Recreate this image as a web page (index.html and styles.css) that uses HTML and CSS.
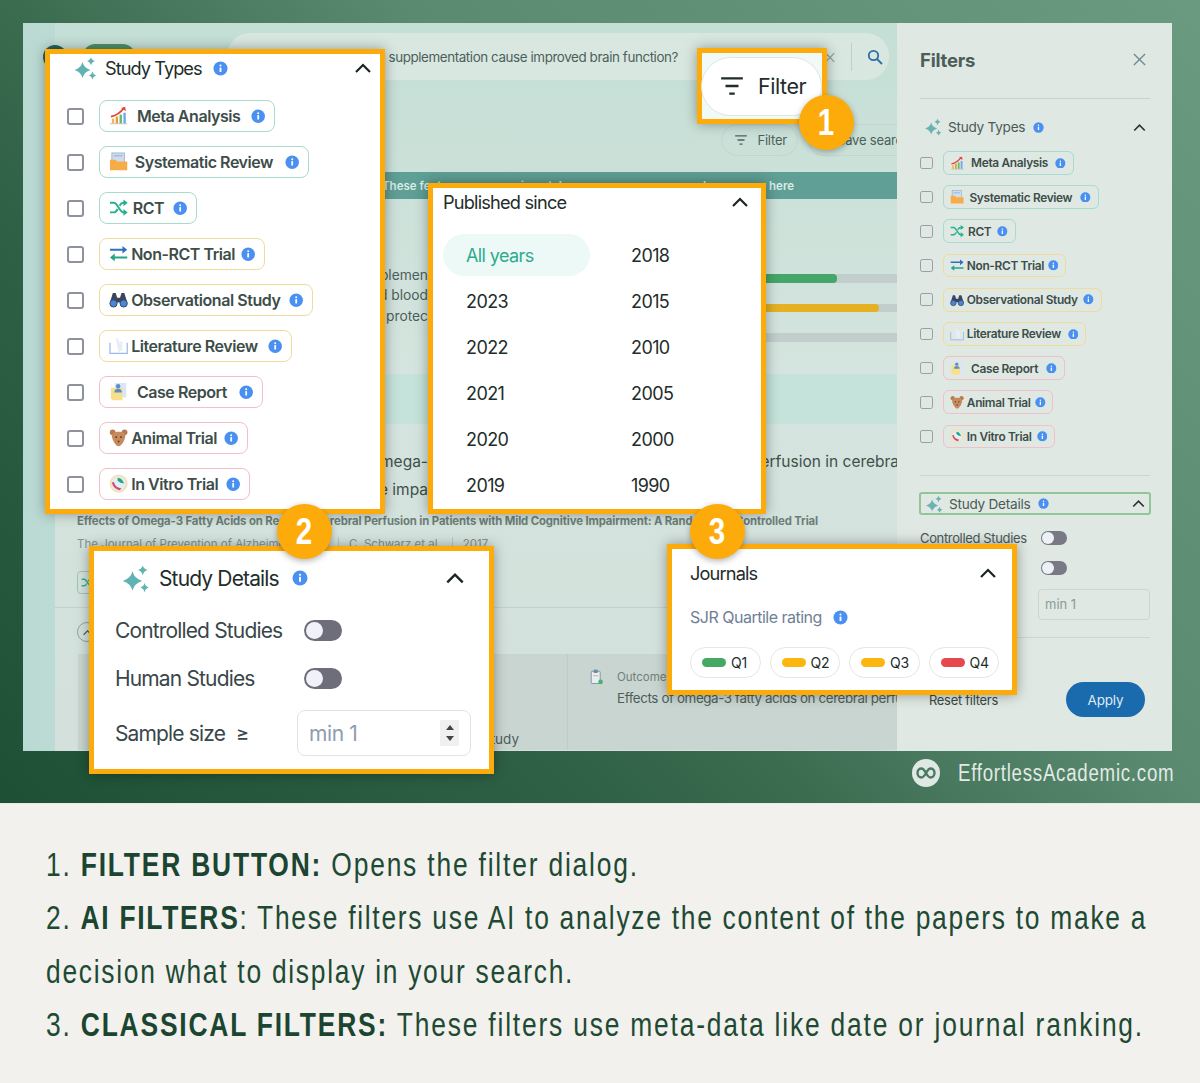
FILE: index.html
```html
<!DOCTYPE html>
<html lang="en">
<head>
<meta charset="utf-8">
<title>Filters</title>
<link rel="stylesheet" href="styles.css">
</head>
<body>
<svg class="sprite" aria-hidden="true">
  <symbol id="i-spark" viewBox="0 0 24 24"><path d="M9.500 6Q11 12 17.500 14 11 16 9.500 22 8 16 1.500 14 8 12 9.500 6Z"/><path d="M18 1Q18.600 4 22 5 18.600 6 18 9.500 17.400 6 14 5 17.400 4 18 1Z"/><path d="M19.500 15.500Q20 18.500 23 19.500 20 20.500 19.500 23.500 19 20.500 16 19.500 19 18.500 19.500 15.500Z"/></symbol>
  <symbol id="i-info" viewBox="0 0 16 16"><circle cx="8" cy="8" r="7.500" fill="#4a90f0"/><circle cx="8" cy="4.800" r="1.100" fill="#fff"/><rect x="7" y="6.800" width="2" height="5" rx=".6" fill="#fff"/></symbol>
  <symbol id="i-chev" viewBox="0 0 20 20"><path d="M3 14 10 7l7 7" fill="none" stroke="currentColor" stroke-width="2.200"/></symbol>
  <symbol id="i-filter" viewBox="0 0 24 24"><path d="M2 5h20M6 12h12M9.500 19h5" fill="none" stroke="currentColor" stroke-width="2.200"/></symbol>
  <symbol id="i-meta" viewBox="0 0 20 20"><rect x="1" y="18" width="18" height="1" fill="#b9c3cf"/><rect x="3" y="13" width="2.500" height="5" fill="#f2b84b"/><rect x="7" y="11" width="2.500" height="7" fill="#e89a3c"/><rect x="11" y="9" width="2.500" height="9" fill="#68b96f"/><rect x="15" y="7" width="2.500" height="11" fill="#6fa8e8"/><path d="M2 11C7 10 12 7 16 1.500" fill="none" stroke="#e2453c" stroke-width="1.800"/><path d="M12.500 2 17 1l.5 4.500Z" fill="#e2453c"/></symbol>
  <symbol id="i-folder" viewBox="0 0 20 20"><rect x="3" y="1" width="13" height="12" fill="#cfdcef" stroke="#8fa8cc" stroke-width=".8"/><rect x="5" y="3.500" width="9" height="1" fill="#8fa8cc"/><path d="M1 8h6l1.500 2H19v9H1Z" fill="#f7ac45"/></symbol>
  <symbol id="i-shuffle" viewBox="0 0 20 20"><path d="M1 5h4c4 0 6 10 10 10h2M1 15h4c1.800 0 3-1.500 4-3.500M11 8c1-1.700 2.300-3 4-3h2" fill="none" stroke="#27b08c" stroke-width="2"/><path d="m15 1.500 4.500 3.500-4.500 3.500ZM15 11.500l4.500 3.500-4.500 3.500Z" fill="#27b08c"/></symbol>
  <symbol id="i-swap" viewBox="0 0 20 20"><path d="M1 6h14" stroke="#2d6fc4" stroke-width="2"/><path d="m14 2 5 4-5 4Z" fill="#2d6fc4"/><path d="M19 14H5" stroke="#23a488" stroke-width="2"/><path d="m6 10-5 4 5 4Z" fill="#23a488"/></symbol>
  <symbol id="i-binoc" viewBox="0 0 20 20"><path d="M1 13 4 3h3l1.500 5h3L13 3h3l3 10-4 3-3-3H8l-3 3Z" fill="#3a4560"/><circle cx="4.700" cy="14" r="3.800" fill="#4a86d8" stroke="#3a4560"/><circle cx="15.300" cy="14" r="3.800" fill="#4a86d8" stroke="#3a4560"/></symbol>
  <symbol id="i-book" viewBox="0 0 20 20"><path d="M1 7v11h18V7" fill="none" stroke="#9db9ea" stroke-width="1.300"/><path d="M10 17C9 11 7 5 7.500 1c2 1.500 3 4 3.500 6 .8-1 2-1.500 3-1.500V15c-1.500 0-3 .8-4 2Z" fill="#e8eef8"/></symbol>
  <symbol id="i-case" viewBox="0 0 20 20"><rect x="6" y="1" width="12" height="15" fill="#dbe6f2"/><path d="M2 6h12v13H4l-2-2Z" fill="#f8df8b"/><circle cx="9.500" cy="4.500" r="2.300" fill="#5a8fcf"/><path d="M5.500 11c0-3 2-4 4-4s4 1 4 4Z" fill="#5a8fcf"/></symbol>
  <symbol id="i-mouse" viewBox="0 0 20 20"><circle cx="3.800" cy="4.500" r="3" fill="#b87a4e"/><circle cx="16.200" cy="4.500" r="3" fill="#b87a4e"/><path d="M3 8c0-3 3.500-4 7-4s7 1 7 4c0 4-4 11-7 11S3 12 3 8Z" fill="#c58a5d"/><circle cx="7.500" cy="9.500" r=".9" fill="#4e2e1c"/><circle cx="12.500" cy="9.500" r=".9" fill="#4e2e1c"/><circle cx="10" cy="14" r="1" fill="#6c3d22"/></symbol>
  <symbol id="i-vitro" viewBox="0 0 20 20"><circle cx="10" cy="10" r="9.500" fill="#f4e2bd"/><circle cx="10" cy="10" r="7.200" fill="#dff1ee"/><path d="M5 8c1 4 3 6 8 7l-2 2c-4-1-7-4-8-8Z" fill="#d8417a"/><path d="M9 4c3 0 6 3 6.500 6L12 9 9 7Z" fill="#2a9f8f"/></symbol>
  <symbol id="i-close" viewBox="0 0 14 14"><path d="m1 1 12 12M13 1 1 13" fill="none" stroke="currentColor" stroke-width="1.500"/></symbol>
  <symbol id="i-search" viewBox="0 0 16 16"><circle cx="6.500" cy="6.500" r="4.700" fill="none" stroke="currentColor" stroke-width="1.800"/><path d="m10 10 5 5" stroke="currentColor" stroke-width="1.800"/></symbol>
  <symbol id="i-clip" viewBox="0 0 16 20"><rect x="1.500" y="3" width="11" height="15" rx="1" fill="#e8eef2" stroke="#6d8aa8"/><rect x="4.500" y="1" width="5" height="4" fill="#6d8aa8"/><rect x="4" y="8" width="6" height="1" fill="#d9a24d"/><circle cx="13" cy="16" r="2.800" fill="#4caf6e"/></symbol>
  <symbol id="i-logo" viewBox="0 0 28 28"><circle cx="14" cy="14" r="14" fill="#dfe9e4"/><path d="M5.500 14c0-3 2-4.500 4-4.500 4 0 5 9 9 9 2 0 4-1.500 4-4.500s-2-4.500-4-4.500c-4 0-5 9-9 9-2 0-4-1.500-4-4.500Z" fill="none" stroke="#4b7a62" stroke-width="2.400"/></symbol>
</svg>

<main class="poster">
  <section class="hero">
    <div class="shot">
      <div class="app">
        <header class="app-top">
          <span class="app-logo"></span>
          <span class="app-tag"></span>
          <div class="searchbar">
            <span class="search-q">Does omega-3 fatty acid supplementation cause improved brain function?</span>
            <svg class="search-x"><use href="#i-close"/></svg>
            <span class="search-sep"></span>
            <svg class="search-go"><use href="#i-search"/></svg>
          </div>
        </header>
        <div class="toolbar">
          <span class="tool-btn"><svg class="tool-icon"><use href="#i-filter"/></svg>Filter</span>
          <span class="tool-btn tool-save">Save search</span>
        </div>
        <div class="banner"><span>These features are experimental.</span><span>Learn more here</span></div>
        <section class="evidence split">
          <div class="evidence-text">
            <p>Omega-3 supplemen</p>
            <p>improved blood</p>
            <p>and protec</p>
          </div>
          <div></div>
          <div class="bars">
            <div class="bar"><span class="fill fill-green bar-w1"></span></div>
            <div class="bar"><span class="fill fill-yellow bar-w2"></span></div>
            <div class="bar"></div>
          </div>
        </section>
        <div class="band"></div>
        <section class="result">
          <div class="split result-title">
            <div class="result-left"><p>Effects of omega-</p><p>acids on the impa</p></div>
            <div></div>
            <div class="result-right">perfusion in cerebral</div>
          </div>
          <p class="paper">Effects of Omega-3 Fatty Acids on Regional Cerebral Perfusion in Patients with Mild Cognitive Impairment: A Randomized Controlled Trial</p>
          <p class="paper-meta"><span class="meta-journal">The Journal of Prevention of Alzheimer's</span><span>C. Schwarz et al.</span><span>2017</span></p>
          <div class="tag-stub"><svg class="tag-icon"><use href="#i-shuffle"/></svg></div>
          <div class="card-rule"></div>
          <div class="round-stub"><svg class="round-icon"><use href="#i-chev"/></svg></div>
        </section>
        <section class="details">
          <div class="details-left">Cohort study</div>
          <div class="details-right">
            <div class="outcome-head"><svg class="clip"><use href="#i-clip"/></svg>Outcome</div>
            <p class="outcome">Effects of omega-3 fatty acids on cerebral perfusion</p>
          </div>
        </section>
      </div>

      <aside class="drawer">
        <header class="drawer-head"><h2>Filters</h2><svg class="drawer-close"><use href="#i-close"/></svg></header>
        <div class="sec-head">
          <svg class="spark"><use href="#i-spark"/></svg><span>Study Types</span>
          <svg class="info"><use href="#i-info"/></svg><svg class="chev"><use href="#i-chev"/></svg>
        </div>
        <ul class="types types-sm">
          <li><span class="box"></span><span class="chip c-green w-meta"><svg class="ic gap-l"><use href="#i-meta"/></svg>Meta Analysis<svg class="info"><use href="#i-info"/></svg></span></li>
          <li><span class="box"></span><span class="chip c-green w-sys"><svg class="ic gap-m"><use href="#i-folder"/></svg>Systematic Review<svg class="info"><use href="#i-info"/></svg></span></li>
          <li><span class="box"></span><span class="chip c-green w-rct"><svg class="ic gap-s"><use href="#i-shuffle"/></svg>RCT<svg class="info"><use href="#i-info"/></svg></span></li>
          <li><span class="box"></span><span class="chip c-yellow w-non"><svg class="ic"><use href="#i-swap"/></svg>Non-RCT Trial<svg class="info"><use href="#i-info"/></svg></span></li>
          <li><span class="box"></span><span class="chip c-yellow w-obs"><svg class="ic"><use href="#i-binoc"/></svg>Observational Study<svg class="info"><use href="#i-info"/></svg></span></li>
          <li><span class="box"></span><span class="chip c-yellow w-lit"><svg class="ic"><use href="#i-book"/></svg>Literature Review<svg class="info"><use href="#i-info"/></svg></span></li>
          <li><span class="box"></span><span class="chip c-pink w-case"><svg class="ic gap-l"><use href="#i-case"/></svg>Case Report<svg class="info"><use href="#i-info"/></svg></span></li>
          <li><span class="box"></span><span class="chip c-pink w-ani"><svg class="ic"><use href="#i-mouse"/></svg>Animal Trial<svg class="info"><use href="#i-info"/></svg></span></li>
          <li><span class="box"></span><span class="chip c-pink w-vit"><svg class="ic"><use href="#i-vitro"/></svg>In Vitro Trial<svg class="info"><use href="#i-info"/></svg></span></li>
        </ul>
        <div class="drawer-rule rule-a"></div>
        <div class="sec-head sec-boxed">
          <svg class="spark"><use href="#i-spark"/></svg><span>Study Details</span>
          <svg class="info"><use href="#i-info"/></svg><svg class="chev"><use href="#i-chev"/></svg>
        </div>
        <div class="drawer-row"><span>Controlled Studies</span><span class="toggle toggle-sm"></span></div>
        <div class="drawer-row"><span>Human Studies</span><span class="toggle toggle-sm"></span></div>
        <div class="drawer-min"><span class="drawer-input">min 1</span></div>
        <div class="drawer-rule rule-b"></div>
        <footer class="drawer-foot"><span class="reset">Reset filters</span><span class="apply">Apply</span></footer>
      </aside>
    </div>
    <div class="brand"><svg class="brand-logo"><use href="#i-logo"/></svg><span class="brand-name">EffortlessAcademic.com</span></div>

    <div class="callout call-types">
      <div class="call-head">
        <svg class="spark"><use href="#i-spark"/></svg><span>Study Types</span>
        <svg class="info"><use href="#i-info"/></svg><svg class="chev"><use href="#i-chev"/></svg>
      </div>
      <ul class="types types-lg">
        <li><span class="box"></span><span class="chip c-green w-meta"><svg class="ic gap-l"><use href="#i-meta"/></svg>Meta Analysis<svg class="info"><use href="#i-info"/></svg></span></li>
        <li><span class="box"></span><span class="chip c-green w-sys"><svg class="ic gap-m"><use href="#i-folder"/></svg>Systematic Review<svg class="info"><use href="#i-info"/></svg></span></li>
        <li><span class="box"></span><span class="chip c-green w-rct"><svg class="ic gap-s"><use href="#i-shuffle"/></svg>RCT<svg class="info"><use href="#i-info"/></svg></span></li>
        <li><span class="box"></span><span class="chip c-yellow w-non"><svg class="ic"><use href="#i-swap"/></svg>Non-RCT Trial<svg class="info"><use href="#i-info"/></svg></span></li>
        <li><span class="box"></span><span class="chip c-yellow w-obs"><svg class="ic"><use href="#i-binoc"/></svg>Observational Study<svg class="info"><use href="#i-info"/></svg></span></li>
        <li><span class="box"></span><span class="chip c-yellow w-lit"><svg class="ic"><use href="#i-book"/></svg>Literature Review<svg class="info"><use href="#i-info"/></svg></span></li>
        <li><span class="box"></span><span class="chip c-pink w-case"><svg class="ic gap-l"><use href="#i-case"/></svg>Case Report<svg class="info"><use href="#i-info"/></svg></span></li>
        <li><span class="box"></span><span class="chip c-pink w-ani"><svg class="ic"><use href="#i-mouse"/></svg>Animal Trial<svg class="info"><use href="#i-info"/></svg></span></li>
        <li><span class="box"></span><span class="chip c-pink w-vit"><svg class="ic"><use href="#i-vitro"/></svg>In Vitro Trial<svg class="info"><use href="#i-info"/></svg></span></li>
      </ul>
    </div>

    <div class="callout call-filter">
      <div class="filter-pill"><svg class="filter-icon"><use href="#i-filter"/></svg><span>Filter</span></div>
    </div>

    <div class="callout call-years">
      <div class="years-head"><span>Published since</span><svg class="chev"><use href="#i-chev"/></svg></div>
      <div class="years-grid">
        <span class="year year-on">All years</span><span class="year">2018</span>
        <span class="year">2023</span><span class="year">2015</span>
        <span class="year">2022</span><span class="year">2010</span>
        <span class="year">2021</span><span class="year">2005</span>
        <span class="year">2020</span><span class="year">2000</span>
        <span class="year">2019</span><span class="year">1990</span>
      </div>
    </div>

    <div class="callout call-details">
      <div class="details-head">
        <svg class="spark"><use href="#i-spark"/></svg><span>Study Details</span>
        <svg class="info"><use href="#i-info"/></svg><svg class="chev"><use href="#i-chev"/></svg>
      </div>
      <div class="opt-row"><span class="opt-label">Controlled Studies</span><span class="toggle"></span></div>
      <div class="opt-row"><span class="opt-label">Human Studies</span><span class="toggle"></span></div>
      <div class="opt-row opt-size">
        <span class="opt-label">Sample size</span><span class="opt-ge">≥</span>
        <span class="num-input"><span>min 1</span><span class="spin"><i class="spin-up"></i><i class="spin-down"></i></span></span>
      </div>
    </div>

    <div class="callout call-journals">
      <div class="journals-head"><span>Journals</span><svg class="chev"><use href="#i-chev"/></svg></div>
      <div class="sjr"><span>SJR Quartile rating</span><svg class="info"><use href="#i-info"/></svg></div>
      <div class="quarts">
        <span class="quart"><i class="q-bar q-green"></i>Q1</span>
        <span class="quart"><i class="q-bar q-amber"></i>Q2</span>
        <span class="quart"><i class="q-bar q-amber"></i>Q3</span>
        <span class="quart"><i class="q-bar q-red"></i>Q4</span>
      </div>
    </div>

    <span class="badge badge-1"><span class="badge-num">1</span></span>
    <span class="badge badge-2"><span class="badge-num">2</span></span>
    <span class="badge badge-3"><span class="badge-num">3</span></span>
  </section>

  <section class="caption">
    <div class="caption-text">
      <p>1. <b>FILTER BUTTON:</b> Opens the filter dialog.</p>
      <p class="cap-tight">2. <b>AI FILTERS</b>: These filters use AI to analyze the content of the papers to make a decision what to display in your search.</p>
      <p>3. <b>CLASSICAL FILTERS:</b> These filters use meta-data like date or journal ranking.</p>
    </div>
  </section>
</main>
</body>
</html>
```

FILE: styles.css
```css
* { box-sizing: border-box; }
html, body { margin: 0; padding: 0; }
body { width: 1200px; height: 1083px; overflow: hidden; background: #f2f1ee; font-family: Inter, "Noto Sans", sans-serif; color: #33423e; }
p, ul, h2 { margin: 0; padding: 0; }
ul { list-style: none; }
svg { display: block; flex: none; }
.sprite { position: absolute; width: 0; height: 0; }

.poster { display: flex; flex-direction: column; }
.hero { position: relative; height: 804px; padding: 23px 28px 0 23px; background: linear-gradient(45deg, #1d5034 0%, #2f6146 30%, #3b6b4f 40%, #5a8a70 60%, #6a9a80 100%); border-bottom: 1px solid #e4ece7; }
.shot { display: grid; grid-template-columns: 874px 275px; height: 728px; overflow: hidden; }

/* background app */
.app { display: flex; flex-direction: column; overflow: hidden; background: linear-gradient(90deg, #b9d9d3 0, #bcdbd4 32px, transparent 32px), linear-gradient(180deg, #c4dfd5 0%, #d5e4de 50%, #d3e0db 100%); color: #4d5f5a; }
.app-top { display: flex; align-items: flex-start; height: 46px; margin-top: 10px; padding-left: 20px; }
.app-logo { width: 24px; height: 24px; margin-top: 12px; border-radius: 50%; background: #24625f; }
.app-tag { width: 52px; height: 24px; margin: 11px 0 0 16px; border-radius: 12px; background: #4f8f6b; }
.searchbar { display: flex; align-items: center; justify-content: flex-end; width: 662px; height: 47px; margin: 0 8px 0 auto; border-radius: 23px; background: #d9e7e1; font-size: 13.4px; letter-spacing: -.41px; }
.search-q { margin-right: 173px; white-space: nowrap; }
.search-x { position: absolute; left: 825px; top: 52px; width: 10px; height: 11px; color: #8a9a96; }
.search-sep { width: 1px; height: 28px; margin-right: 15px; background: #c0cfca; }
.search-go { width: 16px; height: 16px; margin-right: 6px; color: #2f6ca8; }
.toolbar { display: flex; justify-content: flex-end; gap: 10px; height: 32px; margin: 45px -40px 0 0; }
.tool-btn { display: flex; align-items: center; gap: 9px; height: 32px; padding: 0 10px 0 12px; border: 1px solid #c4d4ce; border-radius: 16px; font-size: 13px; letter-spacing: -.2px; }
.tool-icon { width: 14px; height: 14px; }
.tool-save { width: 129px; padding-left: 28px; white-space: nowrap; }
.banner { display: flex; justify-content: space-between; align-items: center; height: 27px; margin: 16px 0 0 32px; padding: 0 103px 0 327px; background: #5f9f95; color: #d9ebe7; font-size: 11.5px; font-weight: 600; white-space: nowrap; }

.split { display: grid; grid-template-columns: 405px 338px 131px; }
.evidence { height: 175px; }
.evidence-text { padding-top: 65.500px; text-align: right; font-size: 13.800px; line-height: 20.5px; white-space: nowrap; }
.bars { display: flex; flex-direction: column; gap: 21px; padding-top: 75px; }
.bar { height: 8.500px; background: #c1cecb; }
.fill { display: block; height: 100%; border-radius: 0 4px 4px 0; }
.fill-green { background: #46a568; }
.fill-yellow { background: #e5b022; }
.bar-w1 { width: 54%; }
.bar-w2 { width: 86%; }
.band { height: 50px; margin-left: 32px; background: #c5e3da; }
.result { display: flex; flex-direction: column; height: 230px; margin-left: 32px; }
.result-title { margin: 24px 0 0 -32px; font-size: 15.5px; line-height: 28px; white-space: nowrap; color: #3f504b; }
.result-left { text-align: right; }
.result-right { margin-left: -15px; }
.paper { margin: 9px 0 0 22px; font-size: 11.350px; font-weight: 700; letter-spacing: -.12px; line-height: 16px; color: #6b7e78; white-space: nowrap; }
.paper-meta { display: flex; margin: 8px 0 0 22px; font-size: 11.5px; line-height: 14px; color: #84938f; white-space: nowrap; }
.meta-journal { width: 250px; }
.paper-meta span + span { margin-left: 11px; padding-left: 10px; border-left: 1px solid #b8c6c1; }
.tag-stub { display: flex; align-items: center; width: 60px; height: 23px; margin: 20px 0 0 22px; padding-left: 3px; border: 1px solid #9bc6b6; border-radius: 4px; }
.tag-icon { width: 13px; height: 13px; }
.card-rule { height: 1px; margin-top: 13px; background: #c3d1cc; }
.round-stub { display: flex; align-items: center; justify-content: center; width: 20px; height: 20px; margin: 14px 0 0 22px; border: 1px solid #8fa19c; border-radius: 50%; color: #4d5f5a; }
.round-icon { width: 11px; height: 11px; }
.details { display: grid; grid-template-columns: 489px 1fr; height: 96px; margin-left: 55px; background: #c9d5d0; }
.details-left { align-self: end; padding: 0 48px 1px 0; text-align: right; font-size: 13.5px; line-height: 20px; }
.details-right { padding: 12px 0 0 22px; border-left: 1px solid #bfcdc8; overflow: hidden; white-space: nowrap; }
.outcome-head { display: flex; align-items: center; gap: 14px; height: 22px; font-size: 11.5px; color: #6f817b; }
.clip { width: 13px; height: 18px; }
.outcome { margin: 1px 0 0 27px; font-size: 13.4px; letter-spacing: -.4px; line-height: 18px; }

/* drawer */
.drawer { padding: 0 22px 0 23px; background: #dfe8e3; color: #4a5b56; }
.drawer-head { display: flex; align-items: center; justify-content: space-between; height: 76px; padding: 0 3px 2px 0; border-bottom: 1px solid #c7d2cd; }
.drawer-head h2 { font-size: 18.500px; font-weight: 700; letter-spacing: -.2px; color: #4b5d58; }
.drawer-close { width: 13px; height: 13px; margin-right: 1px; color: #6f8b90; }
.sec-head { display: flex; align-items: center; height: 28px; margin: 14px 0 10px; padding: 0 3px 0 4px; font-size: 13.6px; letter-spacing: -.25px; }
.sec-head .spark { width: 18px; height: 18px; margin-right: 6px; fill: #6bb2b0; }
.sec-head .info { width: 11px; height: 11px; margin-left: 8px; }
.sec-head .chev { width: 15px; height: 15px; margin-left: auto; color: #26332f; }
.sec-boxed { width: 232px; height: 23px; margin: 16px 0 8px -1px; border: 2px solid #93c49c; border-radius: 3px; }
.drawer-rule { height: 1px; background: #ccd6d1; }
.rule-a { margin-top: 27px; }
.rule-b { margin-top: 17px; }
.drawer-row { display: flex; align-items: center; gap: 14px; height: 30px; font-size: 13px; letter-spacing: -.35px; }
.drawer-min { display: flex; justify-content: flex-end; margin-top: 6px; }
.drawer-input { width: 112px; height: 31px; padding: 6px 6px; border: 1px solid #ccd6d1; border-radius: 4px; font-size: 13px; color: #8b9b96; }
.drawer-foot { display: flex; align-items: center; justify-content: space-between; margin-top: 44px; padding: 0 5px 0 9px; }
.reset { margin-top: 2px; font-size: 12.900px; letter-spacing: -.25px; color: #3a4a45; }
.apply { display: flex; align-items: center; justify-content: center; width: 79px; height: 35px; border-radius: 18px; background: #1a6bae; color: #dfeaf3; font-size: 13.5px; letter-spacing: -.2px; }

/* chips */
.types { display: flex; flex-direction: column; gap: .875em; }
.types-lg { font-size: 16px; }
.types-sm { font-size: 11.900px; }
.types li { display: flex; align-items: center; gap: 10px; }
.types-lg li { gap: 15px; }
.box { width: 1.0625em; height: 1.0625em; border: .125em solid #8d929c; border-radius: .19em; }
.types-sm .box { opacity: .85; }
.chip { display: flex; align-items: center; height: 2em; padding: 0 .5625em 0 .55em; border: .09em solid; border-radius: .5em; font-weight: 600; letter-spacing: -.028em; color: #3d4d49; white-space: nowrap; }
.c-green { border-color: #a8dbce; }
.c-yellow { border-color: #efdc9c; }
.c-pink { border-color: #f2c0c8; }
.ic { width: 1.2em; height: 1.2em; margin-right: .2em; }
.gap-l { margin-right: .56em; }
.gap-m { margin-right: .42em; }
.gap-s { margin-right: .3em; }
.chip .info { width: .9em; height: .9em; margin-left: auto; }
.w-meta { width: 11em; }
.w-sys { width: 13.125em; }
.w-rct { width: 6.125em; }
.w-non { width: 10.375em; }
.w-obs { width: 13.375em; }
.w-lit { width: 12.06em; }
.w-case { width: 10.25em; }
.w-ani { width: 9.31em; }
.w-vit { width: 9.44em; }

/* call-outs */
.callout { position: absolute; border: 5px solid #fdab0b; background: #fff; box-shadow: 0 0 12px rgba(0, 0, 0, .35); color: #222c2a; }
.chev { color: #1d2523; }
.call-types { left: 45px; top: 49px; width: 340px; height: 465px; padding: 0 7px 0 17px; }
.call-head { display: flex; align-items: center; height: 28px; margin: 0 0 18px; padding-left: 6px; font-size: 18.200px; letter-spacing: -.95px; }
.call-head .spark { width: 24px; height: 24px; margin-right: 8px; fill: #5fb3b3; }
.call-head .info { width: 15px; height: 15px; margin-left: 11px; }
.call-head .chev { width: 20px; height: 20px; margin-left: auto; }

.call-filter { left: 697px; top: 48px; width: 130px; height: 76px; background: #f2faf7; }
.filter-pill { display: flex; align-items: center; gap: 13px; width: 121px; height: 59px; margin: 3.500px 0 0 -1px; padding-left: 17px; border: 1px solid #dfe5e3; border-radius: 30px; background: #fff; font-size: 21.500px; letter-spacing: -.45px; }
.filter-icon { width: 26px; height: 26px; }

.call-years { left: 428px; top: 183px; width: 338px; height: 331px; padding: 0 11px 0 10px; }
.years-head { display: flex; align-items: center; justify-content: space-between; height: 28px; margin-bottom: 18px; font-size: 18.200px; letter-spacing: -.8px; }
.years-head .chev { width: 20px; height: 20px; }
.years-grid { display: grid; grid-template-columns: 147px 1fr; grid-auto-rows: 46px; column-gap: 18px; }
.year { display: flex; align-items: center; height: 42px; padding-left: 23px; font-size: 18px; letter-spacing: -.6px; }
.year-on { border-radius: 21px; background: #edf9f6; color: #2dab8f; }

.call-details { left: 89px; top: 546px; width: 405px; height: 228px; padding: 0 18px 0 21px; }
.details-head { display: flex; align-items: center; height: 32px; margin: 11px 0 13px; padding-left: 6px; font-size: 21px; letter-spacing: -.85px; }
.details-head .spark { width: 29px; height: 29px; margin-right: 9px; fill: #5fb3b3; }
.details-head .info { width: 16px; height: 16px; margin-left: 13px; }
.details-head .chev { width: 22px; height: 22px; margin: 0 5px 0 auto; }
.opt-row { display: flex; align-items: center; height: 47.500px; }
.opt-label { width: 189px; font-size: 21px; letter-spacing: -.85px; color: #39464a; }
.opt-size { height: 50px; margin-top: 6px; }
.opt-size .opt-label { width: 121px; }
.opt-ge { width: 61px; font-size: 20px; color: #39464a; }
.toggle { position: relative; display: block; width: 38px; height: 21px; border-radius: 11px; background: #6d6e7a; }
.toggle::before { content: ""; position: absolute; left: 2px; top: 2px; width: 17px; height: 17px; border-radius: 50%; background: #f0f1fb; }
.toggle-sm { width: 26px; height: 14px; margin-left: auto; margin-right: 83px; opacity: .9; }
.toggle-sm::before { left: 1px; top: 1px; width: 12px; height: 12px; }
.num-input { display: flex; align-items: center; justify-content: space-between; width: 174px; height: 46px; padding: 0 11px; border: 1px solid #e1e4e6; border-radius: 8px; font-size: 21px; color: #8d9cb0; letter-spacing: -.4px; }
.spin { display: flex; flex-direction: column; align-items: center; justify-content: center; gap: 6px; width: 19px; height: 26px; background: #f0f0f0; }
.spin-up { width: 0; height: 0; border: 4.500px solid transparent; border-top: 0; border-bottom: 5px solid #444; }
.spin-down { width: 0; height: 0; border: 4.500px solid transparent; border-bottom: 0; border-top: 5px solid #444; }

.call-journals { left: 667px; top: 544px; width: 350px; height: 151px; padding: 0 14px 0 18px; }
.journals-head { display: flex; align-items: center; justify-content: space-between; height: 28px; margin: 10px 0 16px; font-size: 18.200px; letter-spacing: -.85px; }
.journals-head .chev { width: 20px; height: 20px; }
.sjr { display: flex; align-items: center; gap: 11px; height: 28px; font-size: 16px; letter-spacing: -.5px; color: #6f8095; }
.sjr .info { width: 15px; height: 15px; }
.quarts { display: flex; gap: 9px; margin-top: 16px; }
.quart { display: flex; flex: none; align-items: center; gap: 5px; width: 70.500px; height: 31px; padding-left: 11px; border: 1px solid #e6e6e6; border-radius: 16px; font-size: 14px; letter-spacing: -.3px; }
.q-bar { width: 24px; height: 9px; border-radius: 5px; }
.q-green { background: #45a964; }
.q-amber { background: #fdb50f; }
.q-red { background: #e5484f; }

.badge { position: absolute; display: flex; align-items: center; justify-content: center; width: 55px; height: 55px; border-radius: 50%; background: #fdab0b; box-shadow: 0 2px 6px rgba(0, 0, 0, .3); color: #fff; font-family: "Liberation Sans", sans-serif; font-size: 36px; font-weight: 700; }
.badge-num { display: block; transform: scaleX(.82); }
.badge-1 { left: 799px; top: 95px; }
.badge-2 { left: 277px; top: 504px; }
.badge-3 { left: 690px; top: 504px; }

.brand { display: flex; align-items: center; gap: 18px; justify-content: flex-end; height: 44px; margin-right: -1px; color: #e1eae5; font-family: "Liberation Sans", sans-serif; font-size: 23px; letter-spacing: .9px; white-space: nowrap; }
.brand-logo { width: 28px; height: 28px; }
.brand-name { display: block; width: 215px; transform: scaleX(.813); transform-origin: left center; }

.caption { height: 279px; padding: 34px 46px 0; overflow: hidden; font-family: "Liberation Sans", sans-serif; font-size: 33px; letter-spacing: 2.260px; line-height: 53.300px; color: #1e4a33; }
.caption-text { width: 1400px; transform: scaleX(.8); transform-origin: left top; }
.cap-tight { letter-spacing: 2.150px; }
.caption b { color: #1b4530; }
```
